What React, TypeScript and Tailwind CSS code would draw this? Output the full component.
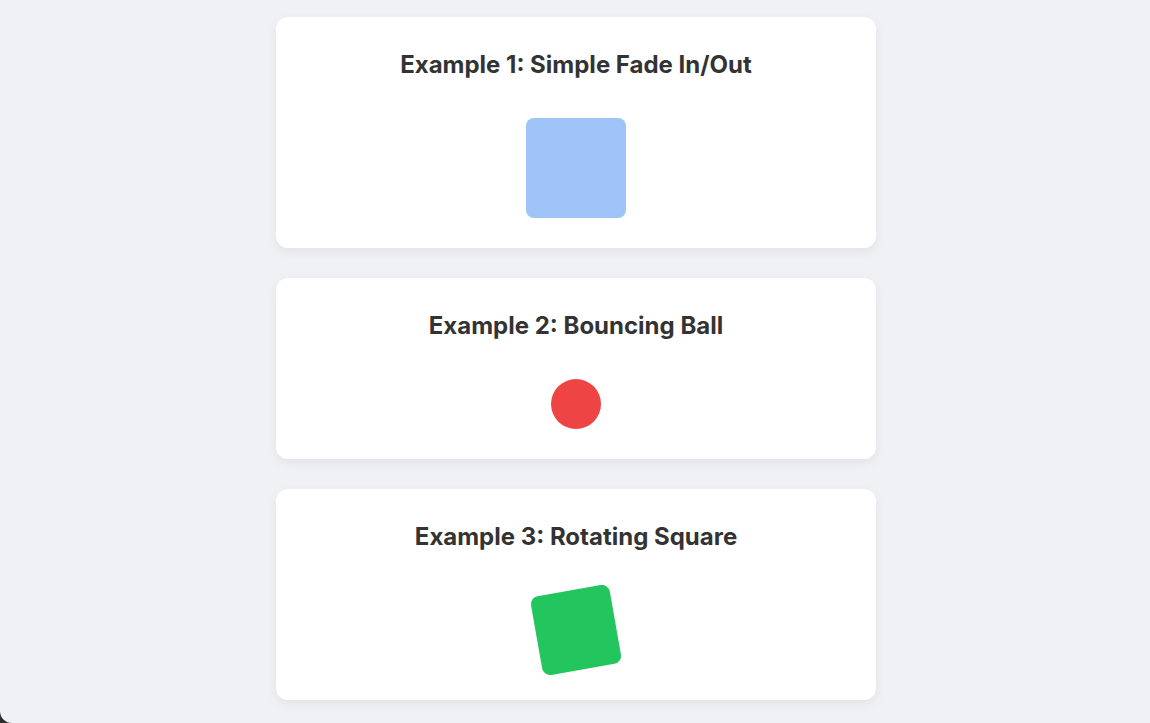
import React from "react";

function Card({ title, children }: { title: string; children: React.ReactNode }) {
  return (
    <div className="w-[600px] bg-white rounded-xl shadow-[0_4px_12px_rgba(0,0,0,0.06)] pt-8 pb-[30px] flex flex-col items-center">
      <h2 className="text-2xl leading-8 font-bold text-[#333333] mb-[37px]">{title}</h2>
      {children}
    </div>
  );
}

export default function App() {
  return (
    <div className="w-full h-[723px] bg-[#2e2e2e] overflow-hidden" style={{ fontFamily: "Inter, 'Noto Sans', sans-serif" }}>
      <div className="w-full h-full bg-[#f0f1f4] rounded-bl-[12px] flex flex-col items-center pt-[17px] pl-[2px] gap-[30px]">
        <Card title="Example 1: Simple Fade In/Out">
          <div className="w-[100px] h-[100px] rounded-lg bg-[#a0c3fa]" />
        </Card>
        <Card title="Example 2: Bouncing Ball">
          <div className="w-[50px] h-[50px] rounded-full bg-[#ef4444]" />
        </Card>
        <Card title="Example 3: Rotating Square">
          <div className="w-[80px] h-[80px] rounded-lg bg-[#22c55e] rotate-[-10deg]" />
        </Card>
      </div>
    </div>
  );
}
